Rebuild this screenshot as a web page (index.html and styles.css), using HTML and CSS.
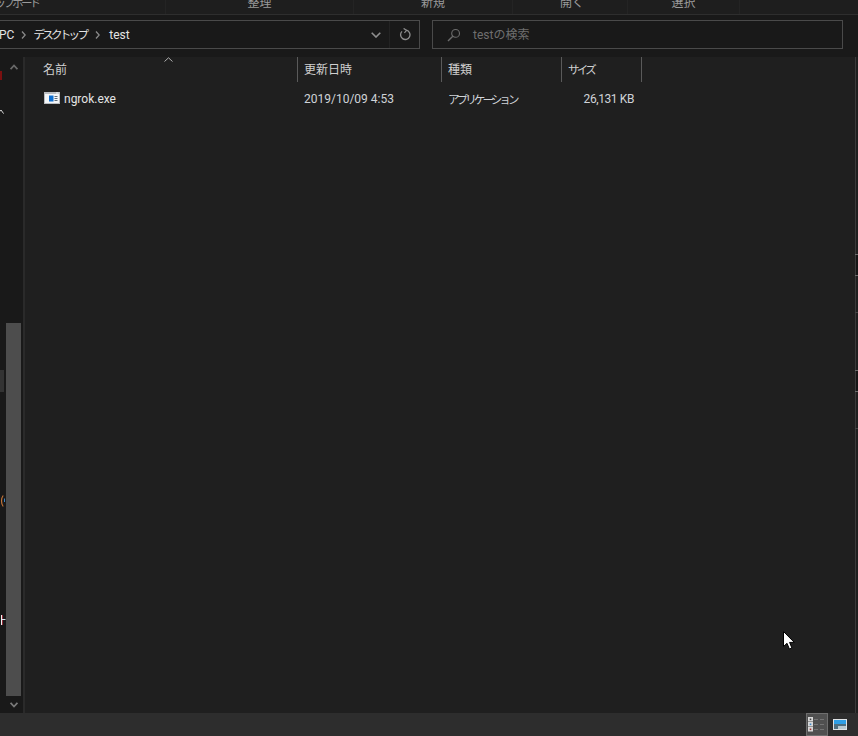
FILE: index.html
```html
<!DOCTYPE html>
<html lang="ja">
<head>
<meta charset="utf-8">
<title>test</title>
<link rel="stylesheet" href="styles.css">
</head>
<body>
<div class="window">
  <div class="ribbon">
    <div class="group g1"><span class="cut kana">クリップボード</span></div>
    <div class="group g2"><span>整理</span></div>
    <div class="group g3"><span>新規</span></div>
    <div class="group g4"><span>開く</span></div>
    <div class="group g5"><span>選択</span></div>
  </div>
  <div class="addressrow">
    <div class="address">
      <div class="crumbs">
        <span class="pc">PC</span>
        <svg class="sep" width="5" height="8" viewBox="0 0 5 8"><path d="M1 0.5 4.2 4 1 7.5" fill="none" stroke="#8a8a8a" stroke-width="1.3"/></svg>
        <span class="kana">デスクトップ</span>
        <svg class="sep sep2" width="5" height="8" viewBox="0 0 5 8"><path d="M1 0.5 4.2 4 1 7.5" fill="none" stroke="#8a8a8a" stroke-width="1.3"/></svg>
        <span>test</span>
      </div>
      <svg class="chev" width="10" height="6" viewBox="0 0 10 6"><path d="M0.7 0.7 5 5 9.3 0.7" fill="none" stroke="#8f8f8f" stroke-width="1.6"/></svg>
      <div class="refresh">
        <svg width="12" height="13" viewBox="0 0 12 13"><path d="M7.4 2.2A4.7 4.7 0 1 1 3 3.4" fill="none" stroke="#8f8f8f" stroke-width="1.3"/><path d="M4.6 0.4 7.6 2.3 5.4 4.8" fill="none" stroke="#8f8f8f" stroke-width="1.2"/></svg>
      </div>
    </div>
    <div class="search">
      <svg width="14" height="14" viewBox="0 0 14 14"><circle cx="8.6" cy="5.4" r="3.9" fill="none" stroke="#6c6c6c" stroke-width="1.1"/><path d="M5.8 8.2 1 13" stroke="#6c6c6c" stroke-width="1.4"/></svg>
      <span>testの検索</span>
    </div>
  </div>
  <div class="main">
    <div class="nav">
      <div class="nav-up">
        <svg width="8" height="6" viewBox="0 0 8 6"><path d="M0.6 5.2 4 1.4 7.4 5.2" fill="none" stroke="#6a6a6a" stroke-width="1.7"/></svg>
      </div>
      <div class="nav-track"><div class="thumb"></div></div>
      <div class="nav-down">
        <svg width="8" height="6" viewBox="0 0 8 6"><path d="M0.6 0.8 4 4.6 7.4 0.8" fill="none" stroke="#7a7a7a" stroke-width="1.7"/></svg>
      </div>
      <div class="frag f1"></div>
      <svg class="frag f2" width="4" height="5" viewBox="0 0 4 5"><path d="M0 2.4 1 1 3.6 4.6" fill="none" stroke="#d8d8d8" stroke-width="1"/></svg>
      <div class="frag f3"></div>
      <svg class="frag f4" width="6" height="12" viewBox="0 0 6 12"><path d="M3.2 0.5C1 3 1 9 3.2 11.5" fill="none" stroke="#d07a3a" stroke-width="1.1"/><path d="M4.5 3.5V7" stroke="#3a86c8" stroke-width="1"/></svg>
      <svg class="frag f5" width="6" height="10" viewBox="0 0 6 10"><path d="M1.5 0V10" stroke="#f2f2f2" stroke-width="1"/><path d="M2.5 0V10" stroke="#b03040" stroke-width="0.8"/><path d="M2 4.5H5.5" stroke="#dfe6f4" stroke-width="1"/></svg>
    </div>
    <div class="splitter"></div>
    <div class="list">
      <svg class="sort" width="9" height="5" viewBox="0 0 9 5"><path d="M0.5 4.5 4.5 0.8 8.5 4.5" fill="none" stroke="#b0b0b0" stroke-width="1"/></svg>
      <div class="head">
        <div class="col name">名前</div>
        <div class="col date">更新日時</div>
        <div class="col type">種類</div>
        <div class="col size"><span class="kana">サイズ</span></div>
      </div>
      <div class="row">
        <div class="cell name">
          <svg width="16" height="12" viewBox="0 0 16 12"><rect width="16" height="12" fill="#b9bcc0"/><rect x="1" y="2" width="14" height="9" fill="#f4f6f8"/><rect x="12" y="0.5" width="2.5" height="1" fill="#f4f6f8"/><rect x="5" y="3.5" width="4.5" height="6" fill="#0e6fd0"/><rect x="10.5" y="4" width="3" height="1" fill="#5d6a78"/><rect x="10.5" y="6" width="3" height="1" fill="#5d6a78"/><rect x="10.5" y="8" width="3" height="1" fill="#5d6a78"/></svg>
          <span class="fname">ngrok.exe</span>
        </div>
        <div class="cell date">2019/10/09 4:53</div>
        <div class="cell type"><span class="kana wide">アプリケーション</span></div>
        <div class="cell size">26,131 KB</div>
      </div>
      <svg class="cursor" width="12" height="19" viewBox="0 0 12 19"><path d="M0.5 0.5V15.5L4 12.3 6.4 18 8.9 17 6.6 11.4H11.3Z" fill="#fff" stroke="#000" stroke-width="1"/></svg>
    </div>
    <div class="edge">
      <div class="patch p1"></div><div class="patch p2"></div>
      <div class="tick t1"></div><div class="tick t2"></div><div class="tick t3"></div><div class="tick t4"></div>
      <div class="tick faint t5"></div><div class="tick faint t6"></div>
    </div>
  </div>
  <div class="status">
    <div class="view active">
      <svg width="18" height="15" viewBox="0 0 18 15"><rect x="0" y="0" width="5" height="4.5" fill="#d8d8d8"/><rect x="1.7" y="1.5" width="1.6" height="1.6" fill="#444"/><rect x="0" y="5" width="5" height="4.5" fill="#d8d8d8"/><rect x="1.7" y="6.5" width="1.6" height="1.6" fill="#3a86c8"/><rect x="0" y="10" width="5" height="4.5" fill="#d8d8d8"/><rect x="1.7" y="11.5" width="1.6" height="1.6" fill="#a03030"/><path d="M6 2.5h4M6 7.5h4M6 12.5h4M12 2.5h4M12 7.5h4M12 12.5h4" stroke="#747474" stroke-width="1"/></svg>
    </div>
    <div class="view">
      <svg width="14" height="11" viewBox="0 0 14 11"><rect width="14" height="11" fill="#dfe2e4"/><rect x="1" y="1" width="12" height="9" fill="#2f9fe6"/><rect x="1" y="5" width="12" height="5" fill="#4f6f80"/><rect x="5" y="7" width="8" height="3" fill="#b8c8d0"/></svg>
    </div>
  </div>
</div>
</body>
</html>
```

FILE: styles.css
```css
* { box-sizing: border-box; }
html, body { margin: 0; padding: 0; height: 100%; }
body { background: #1f1f1f; overflow: hidden; }
.window {
  width: 858px; height: 736px;
  display: flex; flex-direction: column;
  font-family: Roboto, "Noto Sans CJK JP", sans-serif;
  font-size: 12px; color: #d8d8d8;
  background: #1f1f1f;
}
.kana { font-size: 11.5px; letter-spacing: -2.7px; }
.kana.wide { letter-spacing: -2.9px; }
.ribbon {
  height: 15px; display: flex;
  background: #1e1e1e;
  border-bottom: 1px solid #2e2e2e;
  overflow: hidden;
  color: #9a9a9a;
  line-height: 12px;
}
.group { display: flex; justify-content: center; align-items: flex-start; border-right: 1px solid #242424; height: 14px; overflow: hidden; }
.group span { margin-top: -3px; white-space: nowrap; }
.g1 { width: 166px; justify-content: flex-start; }
.g1 .cut { margin-left: -23px; }
.g2 { width: 188px; }
.g3 { width: 159px; }
.g4 { width: 115px; padding-left: 4px; }
.g5 { width: 112px; }
.addressrow {
  height: 42px; display: flex; align-items: flex-start;
  background: #191919;
  padding-top: 5px; padding-right: 15px;
}
.address {
  width: 421px; height: 29px; margin-right: 12px;
  margin-left: -1px;
  display: flex; align-items: center;
  border: 1px solid #4a4a4a;
  background: #191919;
}
.crumbs { flex: 1; display: flex; align-items: center; color: #e4e4e4; white-space: nowrap; line-height: 16px; }
.crumbs .pc { margin-left: -1px; }
.crumbs .sep { margin: 1px 7px 0 7px; }
.crumbs .sep2 { margin: 1px 9px 0 9px; }
.chev { margin-right: 8px; }
.refresh { width: 30px; height: 27px; border-left: 1px solid #232323; display: flex; align-items: center; justify-content: center; }
.search {
  flex: 1; height: 29px;
  display: flex; align-items: center;
  border: 1px solid #4a4a4a;
  padding-left: 14px; gap: 12px;
  color: #6f6f6f; line-height: 16px;
}
.main { flex: 1; min-height: 0; display: flex; background: #1f1f1f; }
.nav { width: 23px; position: relative; display: flex; flex-direction: column; background: #191919; }
.nav-up { height: 19px; display: flex; justify-content: center; align-items: center; padding-left: 4px; padding-top: 1px; }
.nav-track { flex: 1; min-height: 0; display: flex; flex-direction: column; justify-content: flex-end; padding-left: 6px; padding-right: 2px; }
.thumb { height: 373px; background: #4d4d4d; }
.nav-down { height: 17px; display: flex; justify-content: center; align-items: center; padding-left: 4px; }
.frag { position: absolute; left: 0; }
.f1 { top: 14px; width: 2px; height: 9px; background: #7a1010; }
.f2 { top: 52px; }
.f3 { top: 313px; width: 4px; height: 22px; background: #333; }
.f4 { top: 438px; }
.f5 { top: 558px; }
.splitter { width: 2px; background: #2a2a2a; }
.list { flex: 1; min-width: 0; position: relative; padding-left: 18px; }
.sort { position: absolute; left: 139px; top: 0; }
.head { display: flex; height: 25px; color: #d0d0d0; line-height: 27px; }
.col { border-right: 1px solid #5a5a5a; padding-left: 6px; white-space: nowrap; }
.head .name { width: 255px; padding-left: 0; }
.head .date { width: 144px; }
.head .type { width: 120px; }
.head .size { width: 80px; }
.row { display: flex; margin-top: 5px; height: 22px; align-items: center; color: #cfd3d8; white-space: nowrap; }
.cell.name { width: 255px; display: flex; align-items: center; gap: 4px; padding-left: 1px; color: #e4e4e4; }
.fname { padding-top: 2px; }
.cell.date { width: 144px; padding-left: 6px; padding-top: 2px; }
.cell.type { width: 120px; padding-left: 6px; padding-top: 2px; }
.cell.size { width: 72px; text-align: right; padding-top: 2px; letter-spacing: -0.4px; }
.cursor { position: absolute; left: 758px; top: 574px; }
.edge { width: 3px; margin-left: -1px; border-left: 1px solid #3a3a3a; position: relative; }
.patch { position: absolute; left: 0; width: 2px; background: #151515; }
.p1 { top: 197px; height: 21px; }
.p2 { top: 313px; height: 21px; }
.tick { position: absolute; left: -1px; width: 3px; height: 1px; background: #6a6a6a; }
.tick.faint { background: #444; }
.t1 { top: 197px; } .t2 { top: 218px; } .t3 { top: 313px; } .t4 { top: 334px; }
.t5 { top: 255px; } .t6 { top: 371px; }
.status { height: 23px; background: #2d2d2d; display: flex; justify-content: flex-end; align-items: stretch; padding-right: 7px; }
.view { width: 22px; display: flex; align-items: center; justify-content: center; }
.view.active { background: #505050; border: 1px solid #6e6e6e; margin-right: 1px; }
```
